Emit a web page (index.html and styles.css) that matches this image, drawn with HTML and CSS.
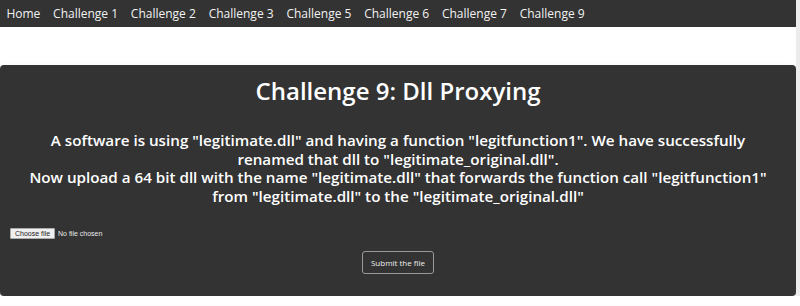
FILE: index.html
```html
<!DOCTYPE html>
<html>
<head>
<meta charset="utf-8">
<link rel="stylesheet" href="styles.css">
</head>
<body>
<nav class="topnav">
  <a href="#">Home</a>
  <a href="#">Challenge 1</a>
  <a href="#">Challenge 2</a>
  <a href="#">Challenge 3</a>
  <a href="#">Challenge 5</a>
  <a href="#">Challenge 6</a>
  <a href="#">Challenge 7</a>
  <a href="#">Challenge 9</a>
</nav>
<main class="card">
  <h1 class="title">Challenge 9: Dll Proxying</h1>
  <p class="desc">A software is using "legitimate.dll" and having a function "legitfunction1". We have successfully renamed that dll to "legitimate_original.dll".<br>Now upload a 64 bit dll with the name "legitimate.dll" that forwards the function call "legitfunction1" from "legitimate.dll" to the "legitimate_original.dll"</p>
  <form class="upload">
    <div class="file-row">
      <span class="file-btn">Choose file</span>
      <span class="file-name">No file chosen</span>
    </div>
    <div class="submit-row">
      <button type="button" class="submit">Submit the file</button>
    </div>
  </form>
</main>
</body>
</html>
```
FILE: styles.css
```css
html {
  background: #fff;
  border-right: 4px solid #ececec;
}
body {
  margin: 0;
  font-family: "Open Sans", "Noto Sans", sans-serif;
}
.topnav {
  background: #333;
  height: 27px;
  display: flex;
  align-items: center;
}
.topnav a {
  color: #f2f2f2;
  text-decoration: none;
  font-size: 12px;
  padding: 0 6.4px;
}
.card {
  margin-top: 38px;
  background: #333;
  border-radius: 4px;
  box-shadow: 0 4px 8px rgba(0,0,0,0.12);
  height: 231px;
  color: #fff;
  box-sizing: border-box;
  padding-top: 9px;
}
.title {
  margin: 0;
  text-align: center;
  font-size: 24px;
  font-weight: 600;
  line-height: 34px;
}
.desc {
  margin: 23px 0 0;
  padding: 0 26px;
  text-align: center;
  font-size: 15.2px;
  font-weight: 600;
  line-height: 18.5px;
}
.upload {
  margin-top: 23px;
}
.file-row {
  padding-left: 10px;
  display: flex;
  align-items: center;
  font-family: "Liberation Sans", Arial, sans-serif;
  font-size: 7px;
}
.file-btn {
  background: #efefef;
  color: #222;
  border: 1px solid #aaa;
  border-radius: 1px;
  padding: 1px 4px;
}
.file-name {
  color: #e8e8e8;
  margin-left: 3px;
}
.submit-row {
  display: flex;
  justify-content: center;
  margin-top: 12px;
}
.submit {
  background: #333;
  color: #eee;
  border: 1px solid #999;
  border-radius: 3px;
  font-family: "Open Sans", sans-serif;
  font-size: 8px;
  padding: 5px 8px;
}
```
